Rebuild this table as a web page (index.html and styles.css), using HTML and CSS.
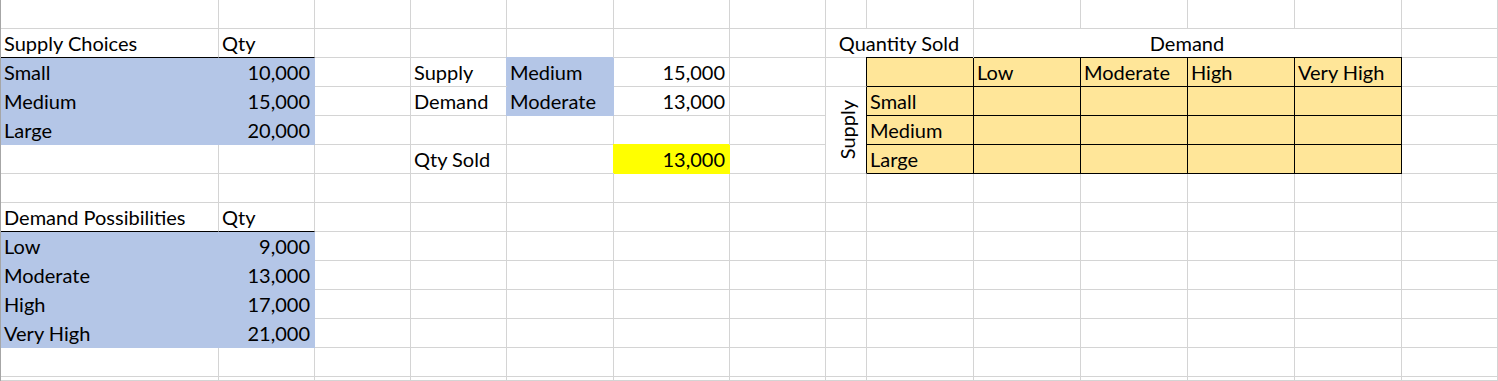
FILE: index.html
```html
<!DOCTYPE html>
<html>
<head>
<meta charset="utf-8">
<link rel="stylesheet" href="styles.css">
</head>
<body>
<div class="sheet">
  <!-- row 1 -->
  <div class="c"></div><div class="c"></div><div class="c"></div><div class="c"></div><div class="c"></div><div class="c"></div><div class="c"></div><div class="c"></div><div class="c"></div><div class="c"></div><div class="c"></div><div class="c"></div><div class="c"></div><div class="c"></div>
  <!-- row 2 -->
  <div class="c hb">Supply Choices</div><div class="c hb">Qty</div><div class="c"></div><div class="c"></div><div class="c"></div><div class="c"></div><div class="c"></div><div class="c ctr span2">Quantity Sold</div><div class="c ctr span4">Demand</div><div class="c"></div>
  <!-- row 3 -->
  <div class="c blue">Small</div><div class="c blue r">10,000</div><div class="c"></div><div class="c">Supply</div><div class="c blue lt">Medium</div><div class="c r">15,000</div><div class="c"></div><div class="c bk-r"></div><div class="c gold t l"></div><div class="c gold t">Low</div><div class="c gold t">Moderate</div><div class="c gold t">High</div><div class="c gold t">Very High</div><div class="c"></div>
  <!-- row 4 -->
  <div class="c blue">Medium</div><div class="c blue r">15,000</div><div class="c"></div><div class="c">Demand</div><div class="c blue lf">Moderate</div><div class="c r">13,000</div><div class="c"></div><div class="c bk-r vert span3r"><span class="rot">Supply</span></div><div class="c gold">Small</div><div class="c gold"></div><div class="c gold"></div><div class="c gold"></div><div class="c gold"></div><div class="c"></div>
  <!-- row 5 -->
  <div class="c blue">Large</div><div class="c blue r">20,000</div><div class="c"></div><div class="c"></div><div class="c"></div><div class="c"></div><div class="c"></div><div class="c gold">Medium</div><div class="c gold"></div><div class="c gold"></div><div class="c gold"></div><div class="c gold"></div><div class="c"></div>
  <!-- row 6 -->
  <div class="c"></div><div class="c"></div><div class="c"></div><div class="c">Qty Sold</div><div class="c"></div><div class="c yellow r lt">13,000</div><div class="c"></div><div class="c gold">Large</div><div class="c gold"></div><div class="c gold"></div><div class="c gold"></div><div class="c gold"></div><div class="c"></div>
  <!-- row 7 -->
  <div class="c"></div><div class="c"></div><div class="c"></div><div class="c"></div><div class="c"></div><div class="c"></div><div class="c"></div><div class="c"></div><div class="c"></div><div class="c"></div><div class="c"></div><div class="c"></div><div class="c"></div><div class="c"></div>
  <!-- row 8 -->
  <div class="c hb">Demand Possibilities</div><div class="c hb">Qty</div><div class="c"></div><div class="c"></div><div class="c"></div><div class="c"></div><div class="c"></div><div class="c"></div><div class="c"></div><div class="c"></div><div class="c"></div><div class="c"></div><div class="c"></div><div class="c"></div>
  <!-- row 9 -->
  <div class="c blue">Low</div><div class="c blue r">9,000</div><div class="c"></div><div class="c"></div><div class="c"></div><div class="c"></div><div class="c"></div><div class="c"></div><div class="c"></div><div class="c"></div><div class="c"></div><div class="c"></div><div class="c"></div><div class="c"></div>
  <!-- row 10 -->
  <div class="c blue">Moderate</div><div class="c blue r">13,000</div><div class="c"></div><div class="c"></div><div class="c"></div><div class="c"></div><div class="c"></div><div class="c"></div><div class="c"></div><div class="c"></div><div class="c"></div><div class="c"></div><div class="c"></div><div class="c"></div>
  <!-- row 11 -->
  <div class="c blue">High</div><div class="c blue r">17,000</div><div class="c"></div><div class="c"></div><div class="c"></div><div class="c"></div><div class="c"></div><div class="c"></div><div class="c"></div><div class="c"></div><div class="c"></div><div class="c"></div><div class="c"></div><div class="c"></div>
  <!-- row 12 -->
  <div class="c blue">Very High</div><div class="c blue r">21,000</div><div class="c"></div><div class="c"></div><div class="c"></div><div class="c"></div><div class="c"></div><div class="c"></div><div class="c"></div><div class="c"></div><div class="c"></div><div class="c"></div><div class="c"></div><div class="c"></div>
  <!-- row 13 -->
  <div class="c"></div><div class="c"></div><div class="c"></div><div class="c"></div><div class="c"></div><div class="c"></div><div class="c"></div><div class="c"></div><div class="c"></div><div class="c"></div><div class="c"></div><div class="c"></div><div class="c"></div><div class="c"></div>
  <!-- row 14 -->
  <div class="c"></div><div class="c"></div><div class="c"></div><div class="c"></div><div class="c"></div><div class="c"></div><div class="c"></div><div class="c"></div><div class="c"></div><div class="c"></div><div class="c"></div><div class="c"></div><div class="c"></div><div class="c"></div>
</div>
</body>
</html>
```

FILE: styles.css
```css
html, body {
  margin: 0;
  padding: 0;
  background: #ffffff;
  overflow: hidden;
}

.sheet {
  display: grid;
  grid-template-columns: 218px 96px 96px 96px 107px 116px 96px 41px 107px 107px 107px 107px 107px 96px;
  grid-template-rows: repeat(13, 29px) 4px;
  height: 381px;
  overflow: hidden;
  border-left: 1px solid #a6a6a6;
  width: 1497px;
  font-family: Lato, "Liberation Sans", sans-serif;
  font-size: 20px;
  color: #000;
}

.c {
  box-sizing: border-box;
  border-right: 1px solid #d4d4d4;
  border-bottom: 1px solid #d4d4d4;
  padding: 1px 4px 0 3px;
  line-height: 27px;
  white-space: nowrap;
  overflow: visible;
}

.r { text-align: right; }
.ctr { text-align: center; }

.span2 { grid-column: span 2; }
.span4 { grid-column: span 4; }
.span3r { grid-row: span 3; }

.hb { border-bottom-color: #000; }

.blue {
  background: #b4c6e7;
  border-color: #b4c6e7;
}
.yellow {
  background: #ffff00;
  border-color: #ffff00;
}
.blue.lt { box-shadow: -1px -1px 0 0 #b4c6e7; }
.blue.lf { box-shadow: -1px 0 0 0 #b4c6e7; }
.yellow.lt { box-shadow: -1px -1px 0 0 #ffff00; }

.gold {
  background: #ffe699;
  border-color: #000;
}
.gold.t { box-shadow: 0 -1px 0 0 #000; }
.gold.t.l { box-shadow: -1px -1px 0 0 #000; }

.bk-r { border-right-color: #000; }

.vert {
  display: flex;
  align-items: center;
  justify-content: center;
  padding: 0 0 0 2px;
}
.rot {
  writing-mode: vertical-rl;
  transform: rotate(180deg);
  line-height: 22px;
}
```
